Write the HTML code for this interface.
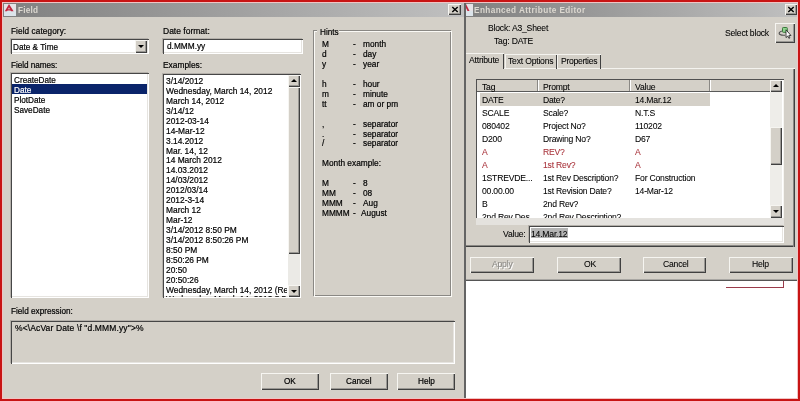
<!DOCTYPE html><html><head><meta charset="utf-8"><style>
html,body{margin:0;padding:0;}
body{width:800px;height:401px;position:relative;overflow:hidden;background:#fff;font-family:"Liberation Sans",sans-serif;}
#w{position:absolute;left:0;top:0;width:800px;height:401px;filter:blur(0.3px);}
.t{position:absolute;white-space:pre;line-height:1;will-change:transform;-webkit-text-stroke:0.2px currentColor;}
</style></head><body><div id="w">
<div style="position:absolute;left:0px;top:0px;width:466px;height:401px;background:#d4d0c8;"></div>
<div style="position:absolute;left:464px;top:0px;width:2px;height:401px;background:#646464;"></div>
<div style="position:absolute;left:2px;top:2px;width:462px;height:1px;background:#f0eeea;"></div>
<div style="position:absolute;left:2px;top:2px;width:1px;height:399px;background:#f0eeea;"></div>
<div style="position:absolute;left:3px;top:3px;width:461px;height:14px;background:linear-gradient(90deg,#808080,#c0c0c0);"></div>
<svg style="position:absolute;left:4px;top:4px" width="12" height="12" viewBox="0 0 12 12"><rect x="0" y="0" width="12" height="12" fill="#e6e2e6"/><rect x="0" y="7" width="12" height="5" fill="#dce4ea"/><path d="M5 0 L0.8 7.2 L3 7.2 L5 3.6 L7 7.2 L9.6 7.2 Z" fill="#c02840"/><rect x="3" y="5.2" width="4.5" height="1.3" fill="#c02840"/></svg>
<div class="t" style="left:17.5px;top:7px;font-size:8.2px;color:#dcd8d0;font-weight:bold;letter-spacing:0.25px;-webkit-text-stroke:0;">Field</div>
<div style="position:absolute;left:448px;top:4px;width:13px;height:11px;background:#d4d0c8;box-shadow:inset 1px 1px 0 #f6f5f1, inset -1px -1px 0 #404040, inset -2px -2px 0 #9a9894;"></div>
<svg style="position:absolute;left:451px;top:6px" width="8" height="7" viewBox="0 0 8 7"><path d="M1.3 1 L6.7 6 M6.7 1 L1.3 6" stroke="#000" stroke-width="1.4"/></svg>
<div class="t" style="left:11px;top:28px;font-size:8.2px;color:#000;letter-spacing:0.1px;">Field category:</div>
<div style="position:absolute;left:11px;top:39px;width:138px;height:15px;background:#fff;box-shadow:inset 1px 1px 0 #464646, inset -1px -1px 0 #fff, inset -2px -2px 0 #e6e4e0, -1px -1px 0 0 #b4b0aa;"></div>
<div class="t" style="left:12.8px;top:44px;font-size:8.2px;color:#000;">Date &amp; Time</div>
<div style="position:absolute;left:135px;top:40px;width:12px;height:13px;background:#d4d0c8;box-shadow:inset 1px 1px 0 #f6f5f1, inset -1px -1px 0 #404040, inset -2px -2px 0 #9a9894;"></div>
<div style="position:absolute;left:138px;top:45px;width:0;height:0;border-left:3.0px solid transparent;border-right:3.0px solid transparent;border-top:3.5px solid #000;"></div>
<div class="t" style="left:11px;top:62px;font-size:8.2px;color:#000;letter-spacing:-0.05px;">Field names:</div>
<div style="position:absolute;left:11px;top:73px;width:138px;height:225px;background:#fff;box-shadow:inset 1px 1px 0 #464646, inset -1px -1px 0 #fff, inset -2px -2px 0 #e6e4e0, -1px -1px 0 0 #b4b0aa;"></div>
<div style="position:absolute;left:12px;top:84px;width:135px;height:10px;background:#0a246a;"></div>
<div class="t" style="left:13.5px;top:77px;font-size:8.2px;color:#000;">CreateDate</div>
<div class="t" style="left:13.5px;top:87px;font-size:8.2px;color:#fff;">Date</div>
<div class="t" style="left:13.5px;top:97px;font-size:8.2px;color:#000;">PlotDate</div>
<div class="t" style="left:13.5px;top:107px;font-size:8.2px;color:#000;">SaveDate</div>
<div class="t" style="left:162.5px;top:27px;font-size:8.5px;color:#000;">Date format:</div>
<div style="position:absolute;left:163px;top:39px;width:140px;height:15px;background:#fff;box-shadow:inset 1px 1px 0 #464646, inset -1px -1px 0 #fff, inset -2px -2px 0 #e6e4e0, -1px -1px 0 0 #b4b0aa;"></div>
<div class="t" style="left:167px;top:42px;font-size:8.3px;color:#000;">d.MMM.yy</div>
<div class="t" style="left:162.5px;top:61px;font-size:8.4px;color:#000;">Examples:</div>
<div style="position:absolute;left:163px;top:74px;width:138px;height:224px;background:#fff;box-shadow:inset 1px 1px 0 #464646, inset -1px -1px 0 #fff, inset -2px -2px 0 #e6e4e0, -1px -1px 0 0 #b4b0aa;"></div>
<div style="position:absolute;left:165px;top:76px;width:122px;height:221px;overflow:hidden;">
<div class="t" style="left:0.5px;top:1px;font-size:8.4px;color:#000;">3/14/2012</div>
<div class="t" style="left:0.5px;top:11px;font-size:8.4px;color:#000;">Wednesday, March 14, 2012</div>
<div class="t" style="left:0.5px;top:21px;font-size:8.4px;color:#000;">March 14, 2012</div>
<div class="t" style="left:0.5px;top:31px;font-size:8.4px;color:#000;">3/14/12</div>
<div class="t" style="left:0.5px;top:41px;font-size:8.4px;color:#000;">2012-03-14</div>
<div class="t" style="left:0.5px;top:51px;font-size:8.4px;color:#000;">14-Mar-12</div>
<div class="t" style="left:0.5px;top:61px;font-size:8.4px;color:#000;">3.14.2012</div>
<div class="t" style="left:0.5px;top:71px;font-size:8.4px;color:#000;">Mar. 14, 12</div>
<div class="t" style="left:0.5px;top:80px;font-size:8.4px;color:#000;">14 March 2012</div>
<div class="t" style="left:0.5px;top:90px;font-size:8.4px;color:#000;">14.03.2012</div>
<div class="t" style="left:0.5px;top:100px;font-size:8.4px;color:#000;">14/03/2012</div>
<div class="t" style="left:0.5px;top:110px;font-size:8.4px;color:#000;">2012/03/14</div>
<div class="t" style="left:0.5px;top:120px;font-size:8.4px;color:#000;">2012-3-14</div>
<div class="t" style="left:0.5px;top:130px;font-size:8.4px;color:#000;">March 12</div>
<div class="t" style="left:0.5px;top:140px;font-size:8.4px;color:#000;">Mar-12</div>
<div class="t" style="left:0.5px;top:150px;font-size:8.4px;color:#000;">3/14/2012 8:50 PM</div>
<div class="t" style="left:0.5px;top:160px;font-size:8.4px;color:#000;">3/14/2012 8:50:26 PM</div>
<div class="t" style="left:0.5px;top:170px;font-size:8.4px;color:#000;">8:50 PM</div>
<div class="t" style="left:0.5px;top:180px;font-size:8.4px;color:#000;">8:50:26 PM</div>
<div class="t" style="left:0.5px;top:190px;font-size:8.4px;color:#000;">20:50</div>
<div class="t" style="left:0.5px;top:200px;font-size:8.4px;color:#000;">20:50:26</div>
<div class="t" style="left:0.5px;top:210px;font-size:8.4px;color:#000;">Wednesday, March 14, 2012 (Re</div>
<div class="t" style="left:0.5px;top:219px;font-size:8.4px;color:#000;">Wednesday, March 14, 2012 8:5</div>
</div>
<div style="position:absolute;left:288px;top:75px;width:12px;height:222px;background:#ebeae6;"></div>
<div style="position:absolute;left:288px;top:75px;width:12px;height:12px;background:#d4d0c8;box-shadow:inset 1px 1px 0 #f6f5f1, inset -1px -1px 0 #404040, inset -2px -2px 0 #9a9894;"></div>
<div style="position:absolute;left:291px;top:79px;width:0;height:0;border-left:3.0px solid transparent;border-right:3.0px solid transparent;border-bottom:3px solid #000;"></div>
<div style="position:absolute;left:288px;top:87px;width:12px;height:167px;background:#d4d0c8;box-shadow:inset 1px 1px 0 #f6f5f1, inset -1px -1px 0 #404040, inset -2px -2px 0 #9a9894;"></div>
<div style="position:absolute;left:288px;top:285px;width:12px;height:12px;background:#d4d0c8;box-shadow:inset 1px 1px 0 #f6f5f1, inset -1px -1px 0 #404040, inset -2px -2px 0 #9a9894;"></div>
<div style="position:absolute;left:291px;top:289.5px;width:0;height:0;border-left:3.0px solid transparent;border-right:3.0px solid transparent;border-top:3px solid #000;"></div>
<div style="position:absolute;left:313px;top:30px;width:138px;height:266px;border:1px solid #8a8884;box-sizing:border-box;"></div>
<div style="position:absolute;left:314px;top:31px;width:138px;height:266px;border:1px solid #fbfaf6;box-sizing:border-box;"></div>
<div style="position:absolute;left:317px;top:27px;width:22px;height:10px;background:#d4d0c8;"></div>
<div class="t" style="left:319.8px;top:29px;font-size:8.2px;color:#000;">Hints</div>
<div class="t" style="left:322px;top:40px;font-size:8.3px;color:#000;">M</div>
<div class="t" style="left:353px;top:40px;font-size:8.3px;color:#000;">-</div>
<div class="t" style="left:362.8px;top:40px;font-size:8.3px;color:#000;">month</div>
<div class="t" style="left:322px;top:50px;font-size:8.3px;color:#000;">d</div>
<div class="t" style="left:353px;top:50px;font-size:8.3px;color:#000;">-</div>
<div class="t" style="left:362.8px;top:50px;font-size:8.3px;color:#000;">day</div>
<div class="t" style="left:322px;top:60px;font-size:8.3px;color:#000;">y</div>
<div class="t" style="left:353px;top:60px;font-size:8.3px;color:#000;">-</div>
<div class="t" style="left:362.8px;top:60px;font-size:8.3px;color:#000;">year</div>
<div class="t" style="left:322px;top:80px;font-size:8.3px;color:#000;">h</div>
<div class="t" style="left:353px;top:80px;font-size:8.3px;color:#000;">-</div>
<div class="t" style="left:362.8px;top:80px;font-size:8.3px;color:#000;">hour</div>
<div class="t" style="left:322px;top:90px;font-size:8.3px;color:#000;">m</div>
<div class="t" style="left:353px;top:90px;font-size:8.3px;color:#000;">-</div>
<div class="t" style="left:362.8px;top:90px;font-size:8.3px;color:#000;">minute</div>
<div class="t" style="left:322px;top:100px;font-size:8.3px;color:#000;">tt</div>
<div class="t" style="left:353px;top:100px;font-size:8.3px;color:#000;">-</div>
<div class="t" style="left:362.8px;top:100px;font-size:8.3px;color:#000;">am or pm</div>
<div class="t" style="left:322px;top:120px;font-size:8.3px;color:#000;">,</div>
<div class="t" style="left:353px;top:120px;font-size:8.3px;color:#000;">-</div>
<div class="t" style="left:362.8px;top:120px;font-size:8.3px;color:#000;">separator</div>
<div class="t" style="left:322px;top:130px;font-size:8.3px;color:#000;">.</div>
<div class="t" style="left:353px;top:130px;font-size:8.3px;color:#000;">-</div>
<div class="t" style="left:362.8px;top:130px;font-size:8.3px;color:#000;">separator</div>
<div class="t" style="left:322px;top:139px;font-size:8.3px;color:#000;">/</div>
<div class="t" style="left:353px;top:139px;font-size:8.3px;color:#000;">-</div>
<div class="t" style="left:362.8px;top:139px;font-size:8.3px;color:#000;">separator</div>
<div class="t" style="left:322px;top:179px;font-size:8.3px;color:#000;">M</div>
<div class="t" style="left:353px;top:179px;font-size:8.3px;color:#000;">-</div>
<div class="t" style="left:362.8px;top:179px;font-size:8.3px;color:#000;">8</div>
<div class="t" style="left:322px;top:189px;font-size:8.3px;color:#000;">MM</div>
<div class="t" style="left:353px;top:189px;font-size:8.3px;color:#000;">-</div>
<div class="t" style="left:362.8px;top:189px;font-size:8.3px;color:#000;">08</div>
<div class="t" style="left:322px;top:199px;font-size:8.3px;color:#000;">MMM</div>
<div class="t" style="left:353px;top:199px;font-size:8.3px;color:#000;">-</div>
<div class="t" style="left:362.8px;top:199px;font-size:8.3px;color:#000;">Aug</div>
<div class="t" style="left:322px;top:209px;font-size:8.3px;color:#000;">MMMM</div>
<div class="t" style="left:353px;top:209px;font-size:8.3px;color:#000;">-</div>
<div class="t" style="left:360.5px;top:209px;font-size:8.3px;color:#000;">August</div>
<div class="t" style="left:322px;top:159px;font-size:8.3px;color:#000;">Month example:</div>
<div class="t" style="left:11px;top:308px;font-size:8.2px;color:#000;">Field expression:</div>
<div style="position:absolute;left:11px;top:321px;width:444px;height:43px;background:#d4d0c8;box-shadow:inset 1px 1px 0 #464646, inset -1px -1px 0 #fff, inset -2px -2px 0 #e6e4e0, -1px -1px 0 0 #b4b0aa;"></div>
<div class="t" style="left:15px;top:324px;font-size:8.5px;color:#000;letter-spacing:0.13px;">%&lt;\AcVar Date \f "d.MMM.yy"&gt;%</div>
<div style="position:absolute;left:261px;top:373px;width:58px;height:17px;background:#d4d0c8;box-shadow:inset 1px 1px 0 #f6f5f1, inset -1px -1px 0 #404040, inset -2px -2px 0 #9a9894;"></div>
<div class="t" style="left:284px;top:378px;font-size:8.2px;color:#000;">OK</div>
<div style="position:absolute;left:330px;top:373px;width:58px;height:17px;background:#d4d0c8;box-shadow:inset 1px 1px 0 #f6f5f1, inset -1px -1px 0 #404040, inset -2px -2px 0 #9a9894;"></div>
<div class="t" style="left:346.4px;top:378px;font-size:8.2px;color:#000;">Cancel</div>
<div style="position:absolute;left:397px;top:373px;width:58px;height:17px;background:#d4d0c8;box-shadow:inset 1px 1px 0 #f6f5f1, inset -1px -1px 0 #404040, inset -2px -2px 0 #9a9894;"></div>
<div class="t" style="left:417.5px;top:378px;font-size:8.2px;color:#000;">Help</div>
<div style="position:absolute;left:466px;top:0px;width:334px;height:281px;background:#d4d0c8;"></div>
<div style="position:absolute;left:466px;top:279px;width:332px;height:1px;background:#a8a6a2;"></div>
<div style="position:absolute;left:466px;top:280px;width:332px;height:1px;background:#555555;"></div>
<div style="position:absolute;left:466px;top:2px;width:332px;height:1px;background:#f0eeea;"></div>
<div style="position:absolute;left:466px;top:3px;width:331px;height:14px;background:linear-gradient(90deg,#808080,#c0c0c0);"></div>
<svg style="position:absolute;left:466px;top:4px" width="7" height="12" viewBox="0 0 7 12"><rect x="0" y="0" width="7" height="12" fill="#e6e2e6"/><rect x="0" y="7" width="7" height="5" fill="#dce4ea"/><path d="M0 0 L3.5 7 L1.5 7 L0 4 Z" fill="#c02840"/></svg>
<div class="t" style="left:474.4px;top:7px;font-size:8.2px;color:#dcd8d0;font-weight:bold;letter-spacing:0.42px;-webkit-text-stroke:0;">Enhanced Attribute Editor</div>
<div style="position:absolute;left:785px;top:4px;width:12px;height:11px;background:#d4d0c8;box-shadow:inset 1px 1px 0 #f6f5f1, inset -1px -1px 0 #404040, inset -2px -2px 0 #9a9894;"></div>
<svg style="position:absolute;left:787px;top:6px" width="8" height="7" viewBox="0 0 8 7"><path d="M1.3 1 L6.7 6 M6.7 1 L1.3 6" stroke="#000" stroke-width="1.4"/></svg>
<div class="t" style="left:487.5px;top:24px;font-size:8.6px;color:#000;letter-spacing:-0.2px;-webkit-text-stroke:0.07px currentColor;">Block: A3_Sheet</div>
<div class="t" style="left:494px;top:37px;font-size:8.6px;color:#000;letter-spacing:-0.2px;-webkit-text-stroke:0.07px currentColor;">Tag: DATE</div>
<div class="t" style="left:724.6px;top:29px;font-size:8.6px;color:#000;letter-spacing:-0.2px;-webkit-text-stroke:0.07px currentColor;">Select block</div>
<div style="position:absolute;left:775px;top:23px;width:20px;height:20px;background:#d4d0c8;box-shadow:inset 1px 1px 0 #f6f5f1, inset -1px -1px 0 #404040, inset -2px -2px 0 #9a9894;"></div>
<svg style="position:absolute;left:778px;top:26px" width="15" height="14" viewBox="0 0 15 14"><path d="M4.5 5 Q1 5.5 1.2 7.8 Q2 9.6 7 9.2" stroke="#505050" fill="none" stroke-width="1.1"/><rect x="4.5" y="1.5" width="4.8" height="4.8" rx="0.8" fill="#90d490" stroke="#3a783a" stroke-width="1"/><path d="M8 3.8 L8 11.6 L9.7 10 L10.9 12.4 L11.9 11.9 L10.8 9.6 L13 9.5 Z" fill="#fff" stroke="#111" stroke-width="0.75"/></svg>
<div style="position:absolute;left:466px;top:68px;width:329px;height:179px;box-shadow:inset 0 1px 0 #f4f3ef, inset -1px 0 0 #404040, inset -2px 0 0 #8a8884, inset 0 -1px 0 #404040, inset 0 -2px 0 #8a8884;"></div>
<div style="position:absolute;left:466px;top:53px;width:38px;height:16px;background:#d4d0c8;box-shadow:inset 0 1px 0 #f4f3ef, inset -1px 0 0 #404040;"></div>
<div class="t" style="left:469.3px;top:56px;font-size:8.6px;color:#000;letter-spacing:-0.2px;-webkit-text-stroke:0.07px currentColor;">Attribute</div>
<div style="position:absolute;left:505px;top:54px;width:52px;height:15px;box-shadow:inset 1px 1px 0 #f4f3ef, inset -1px 0 0 #404040;"></div>
<div class="t" style="left:507.7px;top:57px;font-size:8.6px;color:#000;letter-spacing:-0.2px;-webkit-text-stroke:0.07px currentColor;">Text Options</div>
<div style="position:absolute;left:557px;top:54px;width:44px;height:15px;box-shadow:inset 1px 1px 0 #f4f3ef, inset -1px 0 0 #404040;"></div>
<div class="t" style="left:561px;top:57px;font-size:8.6px;color:#000;letter-spacing:-0.3px;-webkit-text-stroke:0.07px currentColor;">Properties</div>
<div style="position:absolute;left:476px;top:79px;width:308px;height:140px;background:#fff;box-shadow:inset 1px 1px 0 #505050, inset -1px -1px 0 #f6f5f1;"></div>
<div style="position:absolute;left:477px;top:80px;width:293px;height:138px;overflow:hidden;background:#fff;">
<div style="position:absolute;left:0px;top:0px;width:293px;height:12px;background:#d4d0c8;box-shadow:inset 0 -1px 0 #5a5a5a;"></div>
<div style="position:absolute;left:60px;top:0px;width:2px;height:11px;background:#fff;box-shadow:inset 1px 0 0 #8a8884;"></div>
<div style="position:absolute;left:152px;top:0px;width:2px;height:11px;background:#fff;box-shadow:inset 1px 0 0 #8a8884;"></div>
<div style="position:absolute;left:232px;top:0px;width:2px;height:11px;background:#fff;box-shadow:inset 1px 0 0 #8a8884;"></div>
<div class="t" style="left:5.399999999999977px;top:3px;font-size:8.6px;color:#000;letter-spacing:-0.2px;-webkit-text-stroke:0.07px currentColor;">Tag</div>
<div class="t" style="left:66px;top:3px;font-size:8.6px;color:#000;letter-spacing:-0.2px;-webkit-text-stroke:0.07px currentColor;">Prompt</div>
<div class="t" style="left:158px;top:3px;font-size:8.6px;color:#000;letter-spacing:-0.2px;-webkit-text-stroke:0.07px currentColor;">Value</div>
<div style="position:absolute;left:3px;top:13px;width:230px;height:13px;background:#d4d0c8;"></div>
<div class="t" style="left:4.5px;top:16px;font-size:8.6px;color:#000;letter-spacing:-0.2px;-webkit-text-stroke:0.07px currentColor;">DATE</div>
<div class="t" style="left:66px;top:16px;font-size:8.6px;color:#000;letter-spacing:-0.2px;-webkit-text-stroke:0.07px currentColor;">Date?</div>
<div class="t" style="left:158px;top:16px;font-size:8.6px;color:#000;letter-spacing:-0.2px;-webkit-text-stroke:0.07px currentColor;">14.Mar.12</div>
<div class="t" style="left:4.5px;top:29px;font-size:8.6px;color:#000;letter-spacing:-0.2px;-webkit-text-stroke:0.07px currentColor;">SCALE</div>
<div class="t" style="left:66px;top:29px;font-size:8.6px;color:#000;letter-spacing:-0.2px;-webkit-text-stroke:0.07px currentColor;">Scale?</div>
<div class="t" style="left:158px;top:29px;font-size:8.6px;color:#000;letter-spacing:-0.2px;-webkit-text-stroke:0.07px currentColor;">N.T.S</div>
<div class="t" style="left:4.5px;top:42px;font-size:8.6px;color:#000;letter-spacing:-0.2px;-webkit-text-stroke:0.07px currentColor;">080402</div>
<div class="t" style="left:66px;top:42px;font-size:8.6px;color:#000;letter-spacing:-0.2px;-webkit-text-stroke:0.07px currentColor;">Project No?</div>
<div class="t" style="left:158px;top:42px;font-size:8.6px;color:#000;letter-spacing:-0.2px;-webkit-text-stroke:0.07px currentColor;">110202</div>
<div class="t" style="left:4.5px;top:55px;font-size:8.6px;color:#000;letter-spacing:-0.2px;-webkit-text-stroke:0.07px currentColor;">D200</div>
<div class="t" style="left:66px;top:55px;font-size:8.6px;color:#000;letter-spacing:-0.2px;-webkit-text-stroke:0.07px currentColor;">Drawing No?</div>
<div class="t" style="left:158px;top:55px;font-size:8.6px;color:#000;letter-spacing:-0.2px;-webkit-text-stroke:0.07px currentColor;">D67</div>
<div class="t" style="left:4.5px;top:68px;font-size:8.6px;color:#a8323a;letter-spacing:-0.2px;-webkit-text-stroke:0.07px currentColor;">A</div>
<div class="t" style="left:66px;top:68px;font-size:8.6px;color:#a8323a;letter-spacing:-0.2px;-webkit-text-stroke:0.07px currentColor;">REV?</div>
<div class="t" style="left:158px;top:68px;font-size:8.6px;color:#a8323a;letter-spacing:-0.2px;-webkit-text-stroke:0.07px currentColor;">A</div>
<div class="t" style="left:4.5px;top:81px;font-size:8.6px;color:#a8323a;letter-spacing:-0.2px;-webkit-text-stroke:0.07px currentColor;">A</div>
<div class="t" style="left:66px;top:81px;font-size:8.6px;color:#a8323a;letter-spacing:-0.2px;-webkit-text-stroke:0.07px currentColor;">1st Rev?</div>
<div class="t" style="left:158px;top:81px;font-size:8.6px;color:#a8323a;letter-spacing:-0.2px;-webkit-text-stroke:0.07px currentColor;">A</div>
<div class="t" style="left:4.5px;top:94px;font-size:8.6px;color:#000;letter-spacing:-0.2px;-webkit-text-stroke:0.07px currentColor;">1STREVDE...</div>
<div class="t" style="left:66px;top:94px;font-size:8.6px;color:#000;letter-spacing:-0.2px;-webkit-text-stroke:0.07px currentColor;">1st Rev Description?</div>
<div class="t" style="left:158px;top:94px;font-size:8.6px;color:#000;letter-spacing:-0.2px;-webkit-text-stroke:0.07px currentColor;">For Construction</div>
<div class="t" style="left:4.5px;top:107px;font-size:8.6px;color:#000;letter-spacing:-0.2px;-webkit-text-stroke:0.07px currentColor;">00.00.00</div>
<div class="t" style="left:66px;top:107px;font-size:8.6px;color:#000;letter-spacing:-0.2px;-webkit-text-stroke:0.07px currentColor;">1st Revision Date?</div>
<div class="t" style="left:158px;top:107px;font-size:8.6px;color:#000;letter-spacing:-0.2px;-webkit-text-stroke:0.07px currentColor;">14-Mar-12</div>
<div class="t" style="left:4.5px;top:120px;font-size:8.6px;color:#000;letter-spacing:-0.2px;-webkit-text-stroke:0.07px currentColor;">B</div>
<div class="t" style="left:66px;top:120px;font-size:8.6px;color:#000;letter-spacing:-0.2px;-webkit-text-stroke:0.07px currentColor;">2nd Rev?</div>
<div class="t" style="left:158px;top:120px;font-size:8.6px;color:#000;letter-spacing:-0.2px;-webkit-text-stroke:0.07px currentColor;"></div>
<div class="t" style="left:4.5px;top:133px;font-size:8.6px;color:#000;letter-spacing:-0.2px;-webkit-text-stroke:0.07px currentColor;">2nd Rev Des...</div>
<div class="t" style="left:66px;top:133px;font-size:8.6px;color:#000;letter-spacing:-0.2px;-webkit-text-stroke:0.07px currentColor;">2nd Rev Description?</div>
<div class="t" style="left:158px;top:133px;font-size:8.6px;color:#000;letter-spacing:-0.2px;-webkit-text-stroke:0.07px currentColor;"></div>
</div>
<div style="position:absolute;left:770px;top:80px;width:12px;height:138px;background:#eeede9;"></div>
<div style="position:absolute;left:770px;top:80px;width:12px;height:12px;background:#d4d0c8;box-shadow:inset 1px 1px 0 #f6f5f1, inset -1px -1px 0 #404040, inset -2px -2px 0 #9a9894;"></div>
<div style="position:absolute;left:773px;top:84px;width:0;height:0;border-left:3.0px solid transparent;border-right:3.0px solid transparent;border-bottom:3px solid #000;"></div>
<div style="position:absolute;left:770px;top:127px;width:12px;height:38px;background:#d4d0c8;box-shadow:inset 1px 1px 0 #f6f5f1, inset -1px -1px 0 #404040, inset -2px -2px 0 #9a9894;"></div>
<div style="position:absolute;left:770px;top:205px;width:12px;height:13px;background:#d4d0c8;box-shadow:inset 1px 1px 0 #f6f5f1, inset -1px -1px 0 #404040, inset -2px -2px 0 #9a9894;"></div>
<div style="position:absolute;left:773px;top:210px;width:0;height:0;border-left:3.0px solid transparent;border-right:3.0px solid transparent;border-top:3px solid #000;"></div>
<div style="position:absolute;left:476px;top:218px;width:308px;height:7px;background:#e4e2de;"></div>
<div class="t" style="left:503px;top:230px;font-size:8.6px;color:#000;letter-spacing:-0.2px;-webkit-text-stroke:0.07px currentColor;">Value:</div>
<div style="position:absolute;left:529px;top:226px;width:255px;height:17px;background:#fff;box-shadow:inset 1px 1px 0 #464646, inset -1px -1px 0 #fff, inset -2px -2px 0 #e6e4e0, -1px -1px 0 0 #b4b0aa;"></div>
<div style="position:absolute;left:530.5px;top:228px;width:37.5px;height:10px;background:#b4b4b4;"></div>
<div class="t" style="left:531px;top:230px;font-size:8.6px;color:#000;letter-spacing:-0.2px;-webkit-text-stroke:0.07px currentColor;">14.Mar.12</div>
<div style="position:absolute;left:470px;top:257px;width:64px;height:16px;background:#d4d0c8;box-shadow:inset 1px 1px 0 #f6f5f1, inset -1px -1px 0 #404040, inset -2px -2px 0 #9a9894;"></div>
<div class="t" style="left:492.5px;top:261px;font-size:8.6px;color:#fff;letter-spacing:-0.2px;-webkit-text-stroke:0.07px currentColor;">Apply</div>
<div class="t" style="left:491.5px;top:260px;font-size:8.6px;color:#8a8884;letter-spacing:-0.2px;-webkit-text-stroke:0.07px currentColor;">Apply</div>
<div style="position:absolute;left:557px;top:257px;width:64px;height:16px;background:#d4d0c8;box-shadow:inset 1px 1px 0 #f6f5f1, inset -1px -1px 0 #404040, inset -2px -2px 0 #9a9894;"></div>
<div class="t" style="left:583.5px;top:260px;font-size:8.6px;color:#000;letter-spacing:-0.2px;-webkit-text-stroke:0.07px currentColor;">OK</div>
<div style="position:absolute;left:643px;top:257px;width:63px;height:16px;background:#d4d0c8;box-shadow:inset 1px 1px 0 #f6f5f1, inset -1px -1px 0 #404040, inset -2px -2px 0 #9a9894;"></div>
<div class="t" style="left:663px;top:260px;font-size:8.6px;color:#000;letter-spacing:-0.2px;-webkit-text-stroke:0.07px currentColor;">Cancel</div>
<div style="position:absolute;left:729px;top:257px;width:64px;height:16px;background:#d4d0c8;box-shadow:inset 1px 1px 0 #f6f5f1, inset -1px -1px 0 #404040, inset -2px -2px 0 #9a9894;"></div>
<div class="t" style="left:752px;top:260px;font-size:8.6px;color:#000;letter-spacing:-0.2px;-webkit-text-stroke:0.07px currentColor;">Help</div>
<div style="position:absolute;left:726px;top:287px;width:58px;height:1px;background:#9a3a4a;"></div>
<div style="position:absolute;left:783px;top:281px;width:1px;height:7px;background:#9a3a4a;"></div>
<div style="position:absolute;left:0px;top:2px;width:800px;height:1px;background:#f0c4c4;"></div>
<div style="position:absolute;left:2px;top:0px;width:1px;height:401px;background:#f0c4c4;"></div>
<div style="position:absolute;left:797px;top:0px;width:1px;height:401px;background:#f0c4c4;"></div>
<div style="position:absolute;left:0px;top:398px;width:800px;height:1px;background:#f0c4c4;"></div>
<div style="position:absolute;left:0px;top:0px;width:800px;height:2px;background:#c81414;"></div>
<div style="position:absolute;left:0px;top:0px;width:2px;height:401px;background:#c81414;"></div>
<div style="position:absolute;left:798px;top:0px;width:2px;height:401px;background:#c81414;"></div>
<div style="position:absolute;left:0px;top:399px;width:800px;height:2px;background:#c81414;"></div>
</div></body></html>
